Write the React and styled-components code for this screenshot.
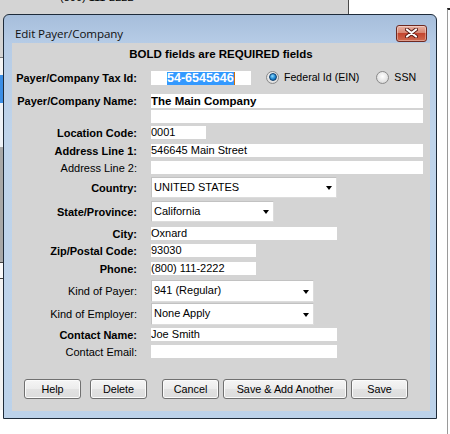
import React from "react";
import styled, { createGlobalStyle } from "styled-components";

const GlobalStyle = createGlobalStyle`
  html, body {
    margin: 0;
    padding: 0;
    background: #fff;
  }
  body {
    font-family: "Liberation Sans", Arial, sans-serif;
  }
`;

const Desktop = styled.div`
  position: relative;
  width: 450px;
  height: 434px;
  overflow: hidden;
  background: #fff;
`;

/* window behind the dialog, only its top strip and left edge show */
const BackWindow = styled.div`
  position: absolute;
  left: 0;
  top: 0;
  width: 348px;
  height: 410px;
  display: flex;
  flex-direction: column;
  border-right: 1px solid #4a4a4a;
  background: #d4d4d4;
`;

const BackStrip = styled.div`
  height: ${(p) => p.$h}px;
  flex: none;
  background: ${(p) => p.$bg};
  overflow: hidden;
`;

const BackText = styled.div`
  margin: -9px 0 0 60px;
  font-size: 11px;
  color: #000;
`;

const SidePane = styled.div`
  position: absolute;
  left: 447px;
  top: 8px;
  width: 3px;
  height: 426px;
  border-left: 1px solid #9a9a9a;
  border-top: 2px solid #222;
`;

const Dialog = styled.div`
  position: absolute;
  left: 3px;
  top: 14px;
  width: 434px;
  height: 405px;
  box-sizing: border-box;
  display: flex;
  flex-direction: column;
  padding: 0 6px 7px 8px;
  border: 1px solid #1e2b3a;
  border-radius: 6px 6px 0 0;
  background: linear-gradient(#a6bedb, #b6cce6 28px, #bfd4eb 120px, #bcd2ea);
`;

const TitleBar = styled.div`
  height: 28px;
  box-sizing: border-box;
  padding: 8px 3px 0 3px;
  display: flex;
  align-items: center;
  flex: none;
`;

const Title = styled.div`
  font-family: "Open Sans", "Noto Sans", sans-serif;
  font-size: 11.6px;
  color: #111;
  letter-spacing: -0.1px;
`;

const CloseButton = styled.div`
  margin-left: auto;
  width: 31px;
  height: 17px;
  box-sizing: border-box;
  border: 1px solid #6e2a22;
  border-radius: 3px;
  display: flex;
  align-items: center;
  justify-content: center;
  background: linear-gradient(#e9b1a3, #d88672 45%, #c4452f 50%, #cf6a4f);
  box-shadow: inset 0 0 0 1px rgba(255, 255, 255, 0.35);
`;

const Client = styled.div`
  flex: 1;
  background: #d4d4d4;
  display: flex;
  flex-direction: column;
  padding-top: 4px;
`;

const Heading = styled.div`
  height: 14px;
  line-height: 14px;
  text-align: center;
  font-size: 11.5px;
  font-weight: bold;
  color: #000;
`;

const Row = styled.div`
  display: grid;
  grid-template-columns: 125px auto;
  column-gap: 14px;
  align-items: center;
  margin-top: ${(p) => p.$gap}px;
`;

const Label = styled.div`
  text-align: right;
  font-size: 11px;
  line-height: 12px;
  white-space: nowrap;
  font-weight: ${(p) => (p.$bold ? "bold" : "normal")};
  color: #000;
`;

const Inline = styled.div`
  display: flex;
  align-items: center;
`;

const TextBox = styled.div`
  width: ${(p) => p.$w}px;
  height: ${(p) => p.$h}px;
  line-height: ${(p) => p.$h}px;
  background: #fff;
  font-size: ${(p) => (p.$strong ? "11.5px" : "11px")};
  font-weight: ${(p) => (p.$strong ? "bold" : "normal")};
  color: #000;
  white-space: nowrap;
  overflow: hidden;
`;

const TaxBox = styled(TextBox)`
  display: flex;
  align-items: center;
  padding-left: 16px;
  box-sizing: border-box;
`;

const Selected = styled.span`
  background: #3399ff;
  color: #fff;
  font-weight: bold;
  font-size: 12.5px;
  line-height: 13px;
  height: 13px;
`;

const Caret = styled.span`
  width: 1px;
  height: 13px;
  background: #d0700a;
`;

const SelectBox = styled.div`
  width: ${(p) => p.$w}px;
  height: ${(p) => p.$h}px;
  box-sizing: border-box;
  display: flex;
  align-items: center;
  justify-content: space-between;
  padding: 0 4px 2px 2px;
  background: #fff;
  border: 1px solid #c2c2c2;
  border-right-color: #dcdcdc;
  border-bottom-color: #dcdcdc;
  font-size: 11px;
  color: #000;
`;

const Arrow = styled.span`
  width: 0;
  height: 0;
  margin-top: 3px;
  border-left: 3.5px solid transparent;
  border-right: 3.5px solid transparent;
  border-top: 4px solid #000;
`;

const RadioOption = styled.div`
  display: flex;
  align-items: center;
  gap: 5px;
  margin-left: ${(p) => p.$offset}px;
  margin-top: -2px;
  font-size: 10.6px;
  color: #000;
`;

const RadioCircle = styled.span`
  width: 13px;
  height: 13px;
  box-sizing: border-box;
  border-radius: 50%;
  border: 1px solid #8a8a8a;
  background: radial-gradient(circle at 50% 40%, #ffffff, #e4e4e4 60%, #c9c9c9);
  display: flex;
  align-items: center;
  justify-content: center;

  &::after {
    content: "";
    display: ${(p) => (p.$on ? "block" : "none")};
    width: 6px;
    height: 6px;
    border-radius: 50%;
    border: 0.5px solid #0d3f6e;
    background: radial-gradient(circle at 40% 35%, #8fdcff, #1a84d0 55%, #0b4d8f);
  }
`;

const ButtonBar = styled.div`
  display: flex;
  margin-top: 21px;
  padding-left: 12px;
`;

const Button = styled.div`
  width: ${(p) => p.$w}px;
  height: 20px;
  margin-left: ${(p) => p.$gap}px;
  box-sizing: border-box;
  border: 1px solid #707070;
  border-radius: 3px;
  display: flex;
  align-items: center;
  justify-content: center;
  background: linear-gradient(#f5f5f5, #ececec 50%, #e2e2e2 51%, #dcdcdc);
  box-shadow: inset 0 0 0 1px #fbfbfb;
  font-size: 10.8px;
  color: #000;
`;

const fields = [
  { label: "Payer/Company Name:", bold: true, gap: 9, w: 272, h: 14, value: "The Main Company", strong: true },
  { label: "", gap: 2, w: 272, h: 13 },
  { label: "Location Code:", bold: true, gap: 3, w: 55, h: 13, value: "0001" },
  { label: "Address Line 1:", bold: true, gap: 5, w: 272, h: 13, value: "546645 Main Street" },
  { label: "Address Line 2:", gap: 4, w: 272, h: 13 },
  { label: "Country:", bold: true, gap: 3, w: 186, h: 21, value: "UNITED STATES", select: true },
  { label: "State/Province:", bold: true, gap: 3, w: 123, h: 21, value: "California", select: true },
  { label: "City:", bold: true, gap: 5, w: 186, h: 13, value: "Oxnard" },
  { label: "Zip/Postal Code:", bold: true, gap: 4, w: 105, h: 13, value: "93030" },
  { label: "Phone:", bold: true, gap: 5, w: 105, h: 13, value: "(800) 111-2222" },
  { label: "Kind of Payer:", gap: 5, w: 163, h: 22, value: "941 (Regular)", select: true },
  { label: "Kind of Employer:", gap: 1, w: 163, h: 22, value: "None Apply", select: true },
  { label: "Contact Name:", bold: true, gap: 3, w: 186, h: 13, value: "Joe Smith" },
  { label: "Contact Email:", gap: 4, w: 186, h: 13 },
];

const buttons = [
  { text: "Help", w: 57, gap: 0 },
  { text: "Delete", w: 57, gap: 9 },
  { text: "Cancel", w: 57, gap: 15 },
  { text: "Save & Add Another", w: 124, gap: 4 },
  { text: "Save", w: 57, gap: 4 },
];

const CloseIcon = () => (
  <svg width="13" height="10" viewBox="0 0 13 10">
    <path d="M2 1.5 L11 8.5 M11 1.5 L2 8.5" stroke="#5a1a12" strokeWidth="4" strokeLinecap="round" />
    <path d="M2 1.5 L11 8.5 M11 1.5 L2 8.5" stroke="#fff" strokeWidth="2.2" strokeLinecap="round" />
  </svg>
);

export default function App() {
  return (
    <>
      <GlobalStyle />
      <Desktop>
        <BackWindow>
          <BackStrip $h={57} $bg="#d4d4d4">
            <BackText>(800) 111-2222</BackText>
          </BackStrip>
          <BackStrip $h={1} $bg="#7a7a7a" />
          <BackStrip $h={17} $bg="#f4f4f4" />
          <BackStrip $h={28} $bg="#3a8ee6" />
          <BackStrip $h={44} $bg="#eef2f7" />
          <BackStrip $h={115} $bg="#a8a8a8" />
          <BackStrip $h={1} $bg="#444" />
          <BackStrip $h={15} $bg="#fafafa" />
          <BackStrip $h={1} $bg="#444" />
          <BackStrip $h={131} $bg="#f2f2f2" />
        </BackWindow>
        <SidePane />

        <Dialog>
          <TitleBar>
            <Title>Edit Payer/Company</Title>
            <CloseButton>
              <CloseIcon />
            </CloseButton>
          </TitleBar>

          <Client>
            <Heading>BOLD fields are REQUIRED fields</Heading>

            <Row $gap={10}>
              <Label $bold>Payer/Company Tax Id:</Label>
              <Inline>
                <TaxBox $w={100} $h={14}>
                  <Selected>54-6545646</Selected>
                  <Caret />
                </TaxBox>
                <RadioOption $offset={15}>
                  <RadioCircle $on />
                  Federal Id (EIN)
                </RadioOption>
                <RadioOption $offset={17}>
                  <RadioCircle />
                  SSN
                </RadioOption>
              </Inline>
            </Row>

            {fields.map((f, i) => (
              <Row key={i} $gap={f.gap}>
                <Label $bold={f.bold}>{f.label}</Label>
                {f.select ? (
                  <SelectBox $w={f.w} $h={f.h}>
                    <span>{f.value}</span>
                    <Arrow />
                  </SelectBox>
                ) : (
                  <TextBox $w={f.w} $h={f.h} $strong={f.strong}>
                    {f.value}
                  </TextBox>
                )}
              </Row>
            ))}

            <ButtonBar>
              {buttons.map((b) => (
                <Button key={b.text} $w={b.w} $gap={b.gap}>
                  {b.text}
                </Button>
              ))}
            </ButtonBar>
          </Client>
        </Dialog>
      </Desktop>
    </>
  );
}
